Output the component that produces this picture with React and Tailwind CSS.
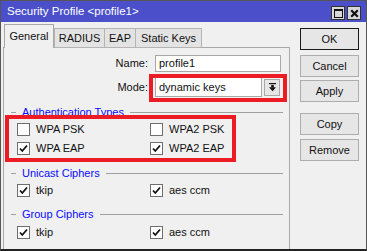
import React from "react";

function Check({ checked }) {
  return (
    <div className="w-[13px] h-[13px] border border-[#6e6e6e] bg-white flex items-center justify-center shrink-0">
      {checked && (
        <svg width="9" height="9" viewBox="0 0 9 9">
          <path d="M1 4.5 L3.3 7 L8 1.5" stroke="#111" strokeWidth="1.8" fill="none" />
        </svg>
      )}
    </div>
  );
}

function CB({ checked, label }) {
  return (
    <div className="w-[133px] flex items-center gap-[6px]">
      <Check checked={checked} />
      <span>{label}</span>
    </div>
  );
}

function Header({ children, className }) {
  return (
    <div className={"h-[14px] flex items-center pl-[7px] pr-[6px] " + className}>
      <div className="w-[5px] h-px bg-[#a0a0a0]" />
      <span className="text-[#0a0aff] px-[6px] leading-none">{children}</span>
      <div className="flex-1 h-px bg-[#a0a0a0]" />
    </div>
  );
}

function Btn({ children, def, className = "" }) {
  return (
    <div
      className={
        "w-[59px] h-[22px] flex items-center justify-center bg-[#e6e6e6] border " +
        (def ? "border-[#1a1a1a]" : "border-[#adadad]") +
        " " +
        className
      }
    >
      {children}
    </div>
  );
}

export default function App() {
  return (
    <div className="relative w-[367px] h-[251px] bg-[#f0f0f0] border border-[#555] border-b-2 border-b-[#222] flex flex-col text-[11px] text-[#111] font-['Liberation_Sans',Arial,sans-serif] overflow-hidden">
      {/* Title bar */}
      <div className="h-[21px] bg-[#4b4fc9] flex items-center pl-[6px] pr-[5px] shrink-0">
        <span className="text-white text-[11.5px] leading-none">Security Profile &lt;profile1&gt;</span>
        <div className="ml-auto flex gap-[2px] mt-[3px]">
          <div className="w-[14px] h-[14px] bg-[#d8d8d8] border border-[#333] flex items-center justify-center">
            <div className="w-[9px] h-[9px] border border-[#111] border-t-2" />
          </div>
          <div className="w-[14px] h-[14px] bg-[#d8d8d8] border border-[#333] flex items-center justify-center">
            <svg width="9" height="9" viewBox="0 0 9 9">
              <path d="M1.2 1.2 L7.8 7.8 M7.8 1.2 L1.2 7.8" stroke="#111" strokeWidth="2.2" />
            </svg>
          </div>
        </div>
      </div>

      <div className="flex flex-1">
        {/* Left: tabs + panel */}
        <div className="w-[289px] flex flex-col">
          <div className="flex pl-[3px] mt-[2px] h-[24px] items-end -mb-px relative z-10">
            <div className="w-[50px] h-[24px] bg-[#f0f0f0] border border-b-0 border-[#a8a8a8] flex items-center justify-center pb-[1px]">
              General
            </div>
            <div className="w-[51px] h-[20px] bg-[#e3e3e3] border border-[#b4b4b4] flex items-center justify-center">
              RADIUS
            </div>
            <div className="w-[31px] h-[20px] bg-[#e3e3e3] border border-l-0 border-[#b4b4b4] flex items-center justify-center">
              EAP
            </div>
            <div className="w-[66px] h-[20px] bg-[#e3e3e3] border border-l-0 border-[#b4b4b4] flex items-center justify-center">
              Static Keys
            </div>
          </div>
          <div className="ml-[2px] flex-1 border-t border-l border-r border-[#a8a8a8] flex flex-col">
            {/* Name */}
            <div className="flex items-center mt-[7px]">
              <div className="w-[144px] text-right">Name:</div>
              <div className="ml-[7px] w-[126px] h-[17px] bg-white border border-[#a8a8a8] flex items-center pl-[3px]">
                profile1
              </div>
            </div>
            {/* Mode */}
            <div className="flex items-center mt-[5px]">
              <div className="w-[144px] text-right">Mode:</div>
              <div className="ml-[7px] w-[107px] h-[20px] bg-white border border-[#a8a8a8] flex items-center pl-[3px]">
                dynamic keys
              </div>
              <div className="ml-[2px] w-[16px] h-[17px] bg-[#e6e6e6] border border-[#a8a8a8] flex items-center justify-center">
                <svg width="7" height="9" viewBox="0 0 7 9">
                  <rect x="0" y="0" width="7" height="1.2" fill="#111" />
                  <rect x="2.2" y="2" width="2.6" height="2.5" fill="#111" />
                  <polygon points="0,4.3 7,4.3 3.5,8.3" fill="#111" />
                </svg>
              </div>
            </div>

            <Header className="mt-[8px]">Authentication Types</Header>
            <div className="flex items-center h-[19px] pl-[13px] mt-[1px]">
              <CB label="WPA PSK" />
              <CB label="WPA2 PSK" />
            </div>
            <div className="flex items-center h-[19px] pl-[13px]">
              <CB checked label="WPA EAP" />
              <CB checked label="WPA2 EAP" />
            </div>

            <Header className="mt-[8px]">Unicast Ciphers</Header>
            <div className="flex items-center h-[19px] pl-[13px] mt-[1px]">
              <CB checked label="tkip" />
              <CB checked label="aes ccm" />
            </div>

            <Header className="mt-[7px]">Group Ciphers</Header>
            <div className="flex items-center h-[19px] pl-[13px] mt-[2px]">
              <CB checked label="tkip" />
              <CB checked label="aes ccm" />
            </div>
          </div>
        </div>

        {/* Right: buttons */}
        <div className="flex flex-col pl-[10px] pt-[6px]">
          <Btn def>OK</Btn>
          <Btn className="mt-[5px]">Cancel</Btn>
          <Btn className="mt-[3px]">Apply</Btn>
          <Btn className="mt-[11px]">Copy</Btn>
          <Btn className="mt-[4px]">Remove</Btn>
        </div>
      </div>

      {/* Red annotation boxes */}
      <div className="absolute left-[148px] top-[73px] w-[138px] h-[28px] border-4 border-[#ed1c24]" />
      <div className="absolute left-[4px] top-[114px] w-[231px] h-[47px] border-4 border-[#ed1c24]" />
    </div>
  );
}
